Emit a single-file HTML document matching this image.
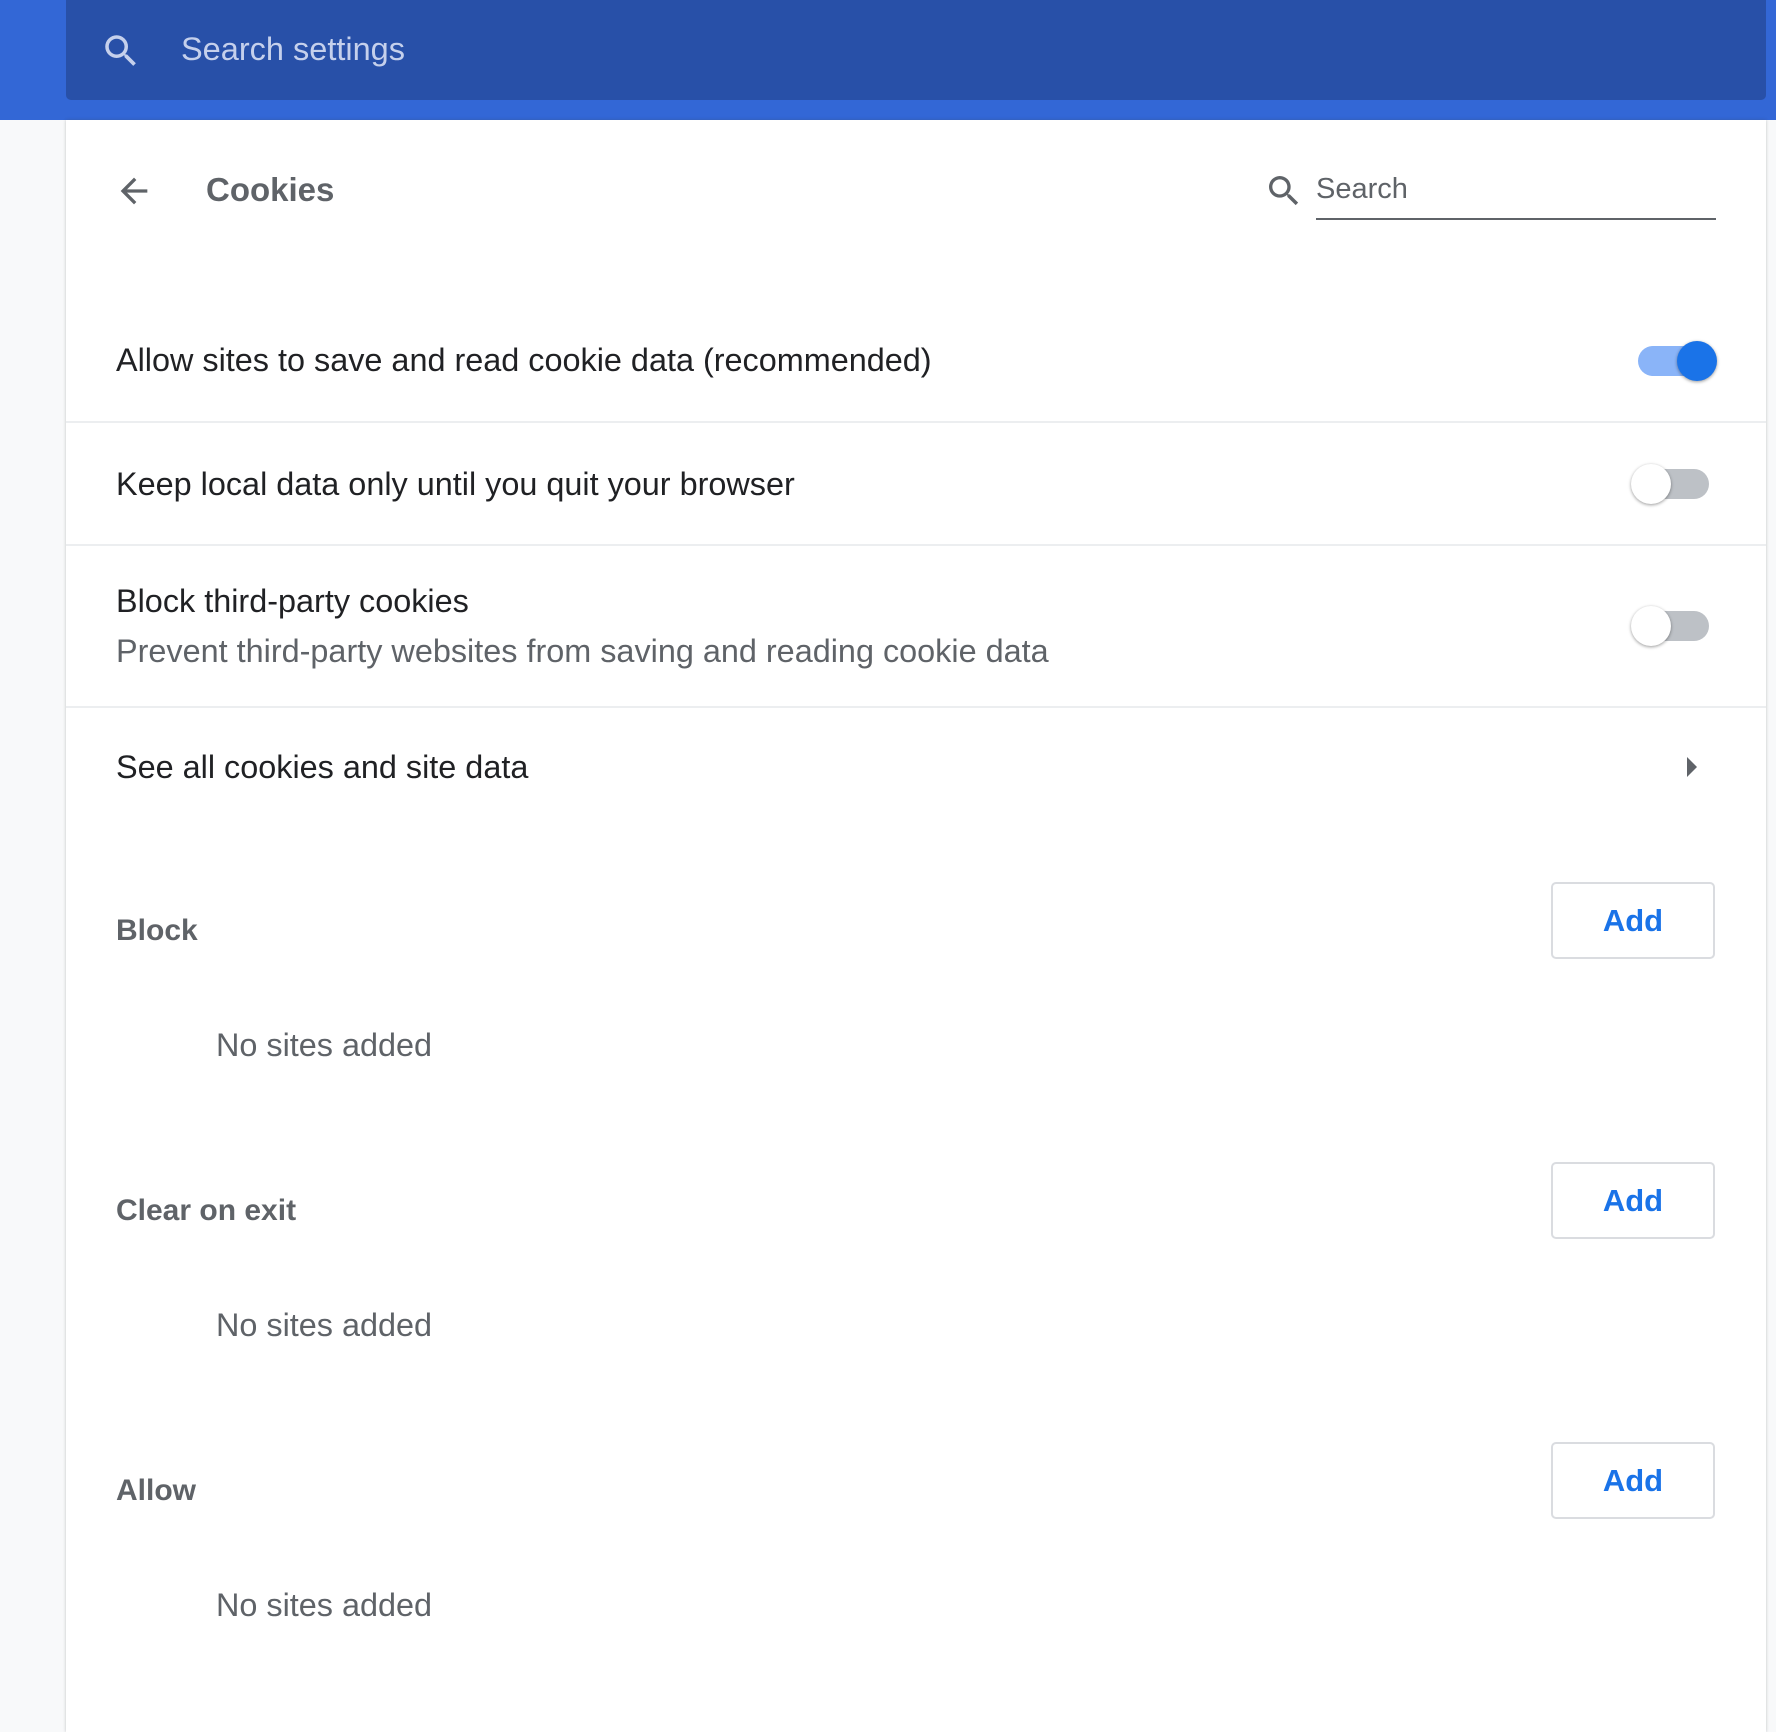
<!DOCTYPE html>
<html><head><meta charset="utf-8"><style>
*{margin:0;padding:0;box-sizing:border-box}
body{width:1776px;height:1732px;background:#f8f9fa;font-family:"Liberation Sans",Arial,sans-serif;position:relative;overflow:hidden}
.hdr{position:absolute;left:0;top:0;width:1776px;height:120px;background:#3367d6}
.sbox{position:absolute;left:66px;top:0;width:1700px;height:100px;background:#2850a8;border-radius:0 0 5px 5px}
.panel{position:absolute;left:66px;top:120px;width:1700px;height:1612px;background:#fff;box-shadow:0 0 3px rgba(60,64,67,.3)}
.t{position:absolute;white-space:nowrap;line-height:1}
.row{color:#202124;font-size:32.4px}
.sub{color:#5f6368;font-size:32.4px}
.lab{color:#5f6368;font-size:30px;font-weight:bold}
.div{position:absolute;left:66px;width:1700px;height:2px;background:#eceef0}
.track{position:absolute;height:30px;border-radius:15px}
.thumb{position:absolute;width:40px;height:40px;border-radius:50%;box-shadow:0 1px 3px rgba(0,0,0,.4)}
.btn{position:absolute;left:1551px;width:164px;height:77px;border:2px solid #dadce0;border-radius:5px;color:#1a73e8;font-size:31px;font-weight:bold;text-align:center;line-height:73px;background:#fff}
</style></head><body>
<div class="hdr"></div>
<div class="sbox"></div>
<svg style="position:absolute;left:100px;top:30px" width="42" height="42" viewBox="0 0 24 24"><path d="M15.5 14h-.79l-.28-.27A6.47 6.47 0 0 0 16 9.5 6.5 6.5 0 1 0 9.5 16c1.61 0 3.09-.59 4.23-1.57l.27.28v.79l5 4.99L20.49 19l-4.99-5zm-6 0C7.01 14 5 11.99 5 9.5S7.01 5 9.5 5 14 7.01 14 9.5 11.99 14 9.5 14z" fill="#c5d0ec"/></svg>
<div class="t" style="left:181px;top:33px;font-size:32.5px;color:#c5d0ec">Search settings</div>
<div class="panel"></div>
<svg style="position:absolute;left:114px;top:171px" width="40" height="40" viewBox="0 0 24 24"><path d="M20 11H7.83l5.59-5.59L12 4l-8 8 8 8 1.41-1.41L7.83 13H20v-2z" fill="#5f6368"/></svg>
<div class="t" style="left:206px;top:173px;font-size:33px;color:#5f6368;font-weight:bold">Cookies</div>
<svg style="position:absolute;left:1264px;top:171px" width="40" height="40" viewBox="0 0 24 24"><path d="M15.5 14h-.79l-.28-.27A6.47 6.47 0 0 0 16 9.5 6.5 6.5 0 1 0 9.5 16c1.61 0 3.09-.59 4.23-1.57l.27.28v.79l5 4.99L20.49 19l-4.99-5zm-6 0C7.01 14 5 11.99 5 9.5S7.01 5 9.5 5 14 7.01 14 9.5 11.99 14 9.5 14z" fill="#5f6368"/></svg>
<div class="t" style="left:1316px;top:175px;font-size:29px;color:#5f6368">Search</div>
<div style="position:absolute;left:1316px;top:218px;width:400px;height:2px;background:#5f6368"></div>

<div class="t row" style="left:116px;top:344px">Allow sites to save and read cookie data (recommended)</div>
<div class="track" style="left:1638px;top:346px;width:68px;background:#8ab4f8"></div>
<div class="thumb" style="left:1677px;top:341px;background:#1a73e8"></div>
<div class="div" style="top:421px"></div>

<div class="t row" style="left:116px;top:468px">Keep local data only until you quit your browser</div>
<div class="track" style="left:1645px;top:469px;width:64px;background:#bdc1c6"></div>
<div class="thumb" style="left:1631px;top:464px;background:#fff"></div>
<div class="div" style="top:544px"></div>

<div class="t row" style="left:116px;top:585px">Block third-party cookies</div>
<div class="t sub" style="left:116px;top:635px">Prevent third-party websites from saving and reading cookie data</div>
<div class="track" style="left:1645px;top:611px;width:64px;background:#bdc1c6"></div>
<div class="thumb" style="left:1631px;top:606px;background:#fff"></div>
<div class="div" style="top:706px"></div>

<div class="t row" style="left:116px;top:751px">See all cookies and site data</div>
<div style="position:absolute;left:1687px;top:757px;width:0;height:0;border-top:10px solid transparent;border-bottom:10px solid transparent;border-left:10px solid #5f6368"></div>

<div class="t lab" style="left:116px;top:916px">Block</div>
<div class="btn" style="top:882px">Add</div>
<div class="t sub" style="left:216px;top:1029px">No sites added</div>

<div class="t lab" style="left:116px;top:1196px">Clear on exit</div>
<div class="btn" style="top:1162px">Add</div>
<div class="t sub" style="left:216px;top:1309px">No sites added</div>

<div class="t lab" style="left:116px;top:1476px">Allow</div>
<div class="btn" style="top:1442px">Add</div>
<div class="t sub" style="left:216px;top:1589px">No sites added</div>
</body></html>
